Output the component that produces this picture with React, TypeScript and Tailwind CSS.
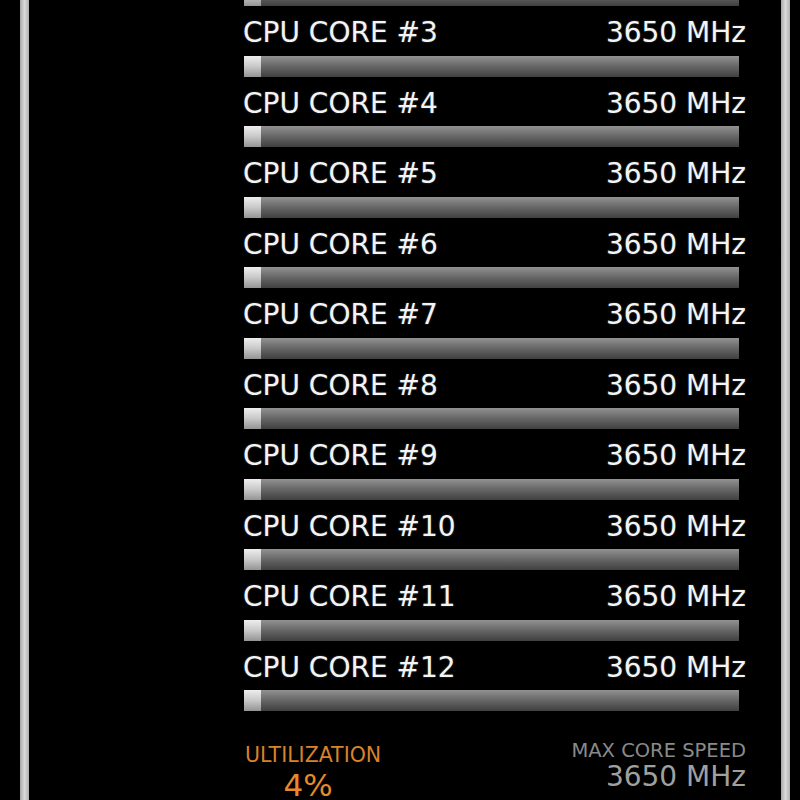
import React from 'react';

const cores = [3, 4, 5, 6, 7, 8, 9, 10, 11, 12];

const font = { fontFamily: '"DejaVu Sans", Verdana, sans-serif' };

const Bar: React.FC<{ className?: string }> = ({ className = '' }) => (
  <div className={`relative h-[21px] w-[495px] ml-[1px] bg-gradient-to-b from-[#929292] via-[#666666] to-[#404040] ${className}`}>
    <div className="absolute left-0 top-0 h-full w-[17px] bg-gradient-to-b from-[#eeeeee] via-[#c8c8c8] to-[#949494]" />
  </div>
);

const App: React.FC = () => {
  return (
    <div className="w-[800px] h-[800px] bg-black overflow-hidden flex" style={font}>
      <div className="ml-[20px] w-[9px] h-full bg-gradient-to-r from-[#a8a8a8] via-[#dadada] to-[#b0b0b0]" />

      <div className="ml-[214px] w-[503px] flex flex-col">
        <Bar className="-mt-[15px]" />
        {cores.map((n) => (
          <div key={n} className="flex flex-col">
            <div className="h-[49.5px] pt-[13px] flex justify-between text-[28px] leading-[28px] text-[#f4f4f4] [text-shadow:0_0_2px_rgba(200,220,255,0.35)]">
              <span>CPU CORE #{n}</span>
              <span>3650 MHz</span>
            </div>
            <Bar />
          </div>
        ))}

        <div className="flex justify-between items-start">
          <div className="mt-[35px] ml-[2px] flex flex-col items-center">
            <span className="text-[20.5px] leading-[19px] text-[#d9822b]">ULTILIZATION</span>
            <span className="mt-[5px] -ml-[10px] text-[31px] leading-[30px] text-[#e68a2c]">4%</span>
          </div>
          <div className="mt-[31px] flex flex-col items-end">
            <span className="text-[19.5px] leading-[18px] text-[#8a8a8a]">MAX CORE SPEED</span>
            <span className="mt-[3px] text-[28px] leading-[28px] text-[#a0a0a0]">3650 MHz</span>
          </div>
        </div>
      </div>

      <div className="ml-[35px] w-[9px] h-full bg-gradient-to-r from-[#a8a8a8] via-[#dadada] to-[#b0b0b0]" />
    </div>
  );
};

export default App;
